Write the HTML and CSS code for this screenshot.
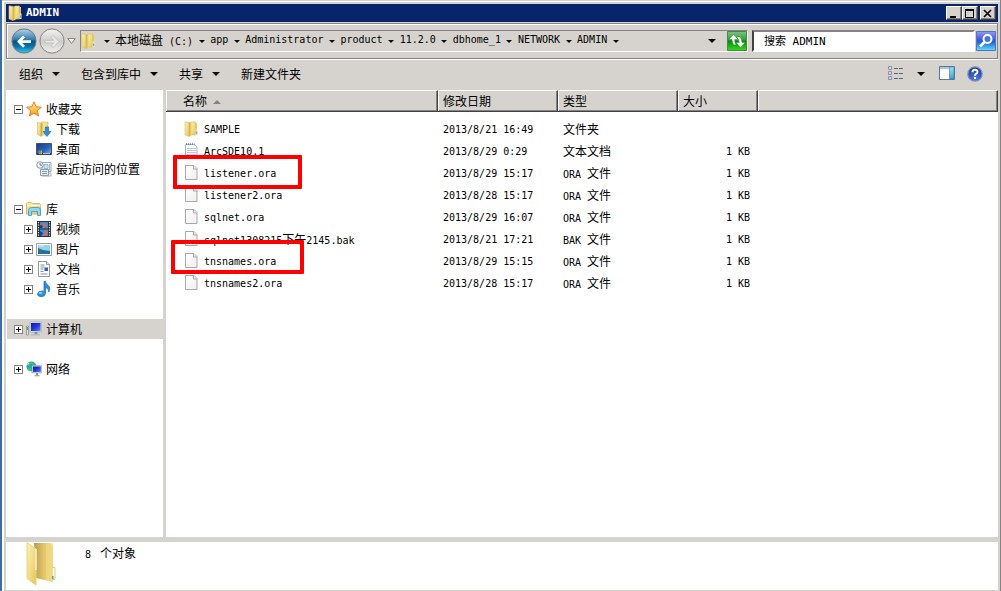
FILE: index.html
```html
<!DOCTYPE html>
<html lang="zh-CN">
<head>
<meta charset="utf-8">
<title>ADMIN</title>
<link rel="stylesheet" href="styles.css">
</head>
<body>
<svg class="sprite" aria-hidden="true">
  <defs>
    <linearGradient id="gold" x1="0" y1="0" x2="1" y2="1"><stop offset="0" stop-color="#fdf3b5"/><stop offset="1" stop-color="#e6c558"/></linearGradient>
    <linearGradient id="goldSide" x1="0" y1="0" x2="1" y2="0"><stop offset="0" stop-color="#b89c50"/><stop offset="0.5" stop-color="#e0c468"/><stop offset="1" stop-color="#f2dc85"/></linearGradient>
    <linearGradient id="screen" x1="0" y1="0" x2="1" y2="1"><stop offset="0" stop-color="#0a1a9c"/><stop offset="0.5" stop-color="#2238d8"/><stop offset="1" stop-color="#5f88f0"/></linearGradient>
    <linearGradient id="desk" x1="0" y1="0" x2="1" y2="1"><stop offset="0" stop-color="#123a86"/><stop offset="0.6" stop-color="#2c67ba"/><stop offset="1" stop-color="#8ab8e8"/></linearGradient>
    <linearGradient id="back" x1="0" y1="0" x2="0" y2="1"><stop offset="0" stop-color="#b5d4e6"/><stop offset="0.45" stop-color="#2c7bab"/><stop offset="0.5" stop-color="#07537f"/><stop offset="0.75" stop-color="#0877ad"/><stop offset="1" stop-color="#2fd2fb"/></linearGradient>
    <linearGradient id="fwd" x1="0" y1="0" x2="0" y2="1"><stop offset="0" stop-color="#f4f4f3"/><stop offset="0.5" stop-color="#cfcdca"/><stop offset="1" stop-color="#f0efed"/></linearGradient>
    <linearGradient id="green" x1="0" y1="0" x2="0" y2="1"><stop offset="0" stop-color="#7fc184"/><stop offset="0.45" stop-color="#2f9e35"/><stop offset="0.5" stop-color="#058a0b"/><stop offset="1" stop-color="#35dc1c"/></linearGradient>
    <linearGradient id="find" x1="0" y1="0" x2="0" y2="1"><stop offset="0" stop-color="#8f9cf3"/><stop offset="0.45" stop-color="#3d55dd"/><stop offset="0.55" stop-color="#1f62d8"/><stop offset="1" stop-color="#62e0fb"/></linearGradient>
    <linearGradient id="paper" x1="0" y1="0" x2="1" y2="1"><stop offset="0" stop-color="#fff"/><stop offset="1" stop-color="#f3ecef"/></linearGradient>
    <radialGradient id="help" cx="0.5" cy="0.8" r="0.8"><stop offset="0" stop-color="#4f7fe6"/><stop offset="1" stop-color="#17339b"/></radialGradient>
    <linearGradient id="star" x1="0" y1="0" x2="0" y2="1"><stop offset="0" stop-color="#fff08a"/><stop offset="1" stop-color="#f99b15"/></linearGradient>
    <linearGradient id="blueGlass" x1="0" y1="0" x2="0" y2="1"><stop offset="0" stop-color="#a7e0f5"/><stop offset="1" stop-color="#3d9fd0"/></linearGradient>
  </defs>
  <symbol id="i-folder" viewBox="0 0 16 16">
    <path d="M7 1h4.500v13H7z" fill="url(#gold)" stroke="#dcbb55" stroke-width=".6"/>
    <path d="M5 1.500 7.500 1v14L5 15.500z" fill="url(#goldSide)"/>
    <path d="M1 .8 5 1.500v14L1 14z" fill="url(#gold)" stroke="#dfc05c" stroke-width=".6"/>
    <path d="M11.500 2H13v12h-1.500z" fill="#e6c763"/>
    <path d="M11.500 8.500H13.500v5.500h-2z" fill="#f6e6a0"/><path d="M11.800 10.500h1.400v2.500h-1.400z" fill="#58b7e2"/>
  </symbol>
  <symbol id="i-bigfolder" viewBox="0 0 32 44">
    <path d="M8 1h16l3 3v36L10 36z" fill="url(#goldSide)"/>
    <path d="M20 2 27 1v39l-7-1.500z" fill="#efd880" opacity=".7"/>
    <path d="M1 .500 10 7v36L1 36.500z" fill="url(#gold)" stroke="#ecd280"/>
    <path d="M10 7v21" stroke="#fffbe0" stroke-width="1.200"/>
    <path d="M26 25.500h3v12h-3z" fill="#fffbe5" stroke="#e5cc78"/><path d="M26 34h1.600v3H26z" fill="#4b9be8"/>
  </symbol>
  <symbol id="i-star" viewBox="0 0 16 16">
    <path d="m8 .8 2.100 4.900 5.300.5-4 3.500 1.200 5.300L8 12.200 3.400 15l1.200-5.300-4-3.500 5.300-.5z" fill="url(#star)" stroke="#e2761b" stroke-width=".9"/>
  </symbol>
  <symbol id="i-download" viewBox="0 0 16 16">
    <path d="M1.500 1 5 2.500v13L1.500 13.500z" fill="url(#gold)" stroke="#d8b550" stroke-width=".6"/><path d="M5 1h7v13H5z" fill="url(#gold)" stroke="#d8b550" stroke-width=".6"/><path d="M5 2.500 7.500 1v13L5 15.500z" fill="url(#goldSide)"/>
    <path d="M9.500 6h3v4.500H15L11 15.500 7.200 10.500h2.300z" fill="#2e8ddf" stroke="#1266b0" stroke-width=".6"/>
  </symbol>
  <symbol id="i-desktop" viewBox="0 0 16 16">
    <path d="M.5 2.500h15v11H.5z" fill="url(#desk)" stroke="#40536e"/><path d="M1 12h14v1.500H1z" fill="#263a59"/><path d="M7 12h7v1H7z" fill="#aebfd3"/>
    <path d="M2.500 9.500h1.800v1.800H2.500z" fill="#f06a2c"/><path d="M4.500 9.500h1.500v1.800H4.500z" fill="#77d145"/><path d="M2.500 11.500h1.800V13H2.500z" fill="#49b5f2"/><path d="M4.500 11.500h1.500V13H4.500z" fill="#ffd43b"/>
  </symbol>
  <symbol id="i-recent" viewBox="0 0 16 16">
    <path d="M6 1.500h9v9H6z" fill="#f7fafc" stroke="#9daab3"/><path d="M8 3.500h4v4H8z" fill="#cce5f4" stroke="#6fa6c5" stroke-width=".7"/><path d="M13.500 3v6" stroke="#a8bac7"/>
    <path d="M4.500 8.500h8v6h-8z" fill="#e4edf1" stroke="#8c9ba5"/><path d="M6 10.500h5M6 12.500h5" stroke="#759fb5"/><path d="M13 12h2v3H6" fill="none" stroke="#a3adb4"/>
    <circle cx="4" cy="4" r="3.300" fill="#f5f6f7" stroke="#8e9aa5"/><path d="M4 2v2.200h2" fill="none" stroke="#53616e" stroke-width=".8"/>
  </symbol>
  <symbol id="i-library" viewBox="0 0 16 16">
    <path d="M.5 13V2.500l1-1h4l1 1h7l1 1V13z" fill="url(#gold)" stroke="#d3aa42" stroke-width=".8"/><path d="M1 4.500h13.500" stroke="#fff7c8"/>
    <path d="M2.500 14.500V9.500Q2.500 6.500 5.500 6.500h6.500q2.500 0 2.500 3v5h-3v-4h-6v4z" fill="#8fd6f3" stroke="#3a95c4" stroke-width=".8"/>
  </symbol>
  <symbol id="i-video" viewBox="0 0 16 16">
    <path d="M1 0h14v16H1z" fill="#27323c"/><path d="M4 1h8v6.500H4zM4 8.500h8V15H4z" fill="#3c8ed0"/>
    <path d="M7 1.500 11 4 8 7H6zM9 9l3 2-2 4H7z" fill="#d46e58"/><path d="m4 4 3 1-1 2H4zM4 10l3 2-2 3H4z" fill="#193f9e"/>
    <path d="M2.500 1v15M13.500 1v15" stroke="#dfe6eb" stroke-width="1.200" stroke-dasharray="1.200 1.300"/>
  </symbol>
  <symbol id="i-picture" viewBox="0 0 16 16">
    <path d="M.5 2.500h15v12H.5z" fill="#fff" stroke="#95a0a8"/><path d="M2 4h12v9H2z" fill="#8fd2f3"/><path d="m2 7 5 2 7 1V13H2z" fill="#2f7d55"/><path d="M2 11q6-2 12 0v2H2z" fill="#1c6eb5"/><path d="M3 5h5" stroke="#dff3fb"/>
  </symbol>
  <symbol id="i-document" viewBox="0 0 16 16">
    <path d="M2.500.5h8l3 3v12h-11z" fill="#fff" stroke="#929ba3"/><path d="M10.500.5v3h3" fill="#e3e8ec" stroke="#929ba3"/><path d="M4.500 4h4M4.500 6h4M4.500 8h3M4.500 10.500h3M4.500 13h7" stroke="#7b93ab"/><path d="M8.500 6.500H12V10H8.500z" fill="#2b5fc2"/>
  </symbol>
  <symbol id="i-music" viewBox="0 0 16 16">
    <path d="M8 .5h1.500q.3 2.500 2.800 4 2.500 2 .5 6.500.3-3.500-3.300-4.500v6q-.5 3-4 3.200-4 0-4-2.700.5-3 4.500-3 1.200 0 2 .5z" fill="#2c91de" stroke="#1769b5" stroke-width=".7"/><ellipse cx="4.500" cy="12" rx="1.800" ry="1" fill="#92d4fa"/>
  </symbol>
  <symbol id="i-computer" viewBox="0 0 16 16">
    <path d="M.5 5h2v9h-2z" fill="#dce1dc" stroke="#858b88" stroke-width=".7"/><path d="M1 6h1v3H1z" fill="#39b540"/>
    <path d="M4 1h11.500v10H4z" fill="#d9dde5" stroke="#a1a6b0" stroke-width=".6"/><path d="M5 2h9.500v8H5z" fill="url(#screen)"/><path d="M8.500 11h3v2h-3z" fill="#8b8e96"/><path d="M5 13h9v1.500H5z" fill="#b7bac0"/>
  </symbol>
  <symbol id="i-network" viewBox="0 0 16 16">
    <circle cx="5.500" cy="5.500" r="5" fill="#2796df"/><path d="M4 1q4-.5 5 2L7 5 6 3 3 5 1 4q1-2 3-3zM1 6l4 1v3H3Q1 8.500 1 6z" fill="#37c94c"/><path d="M3 2 1.500 4" stroke="#dff6ff"/>
    <path d="M6 4.500h9.700v7.500H6z" fill="#d4dae6" stroke="#959dac" stroke-width=".6"/><path d="M7 5.500h7.800v5.500H7z" fill="url(#screen)"/><path d="M10 12h2v2h-2zM8.500 14.200h5v1h-5z" fill="#858c97"/>
  </symbol>
  <symbol id="i-file" viewBox="0 0 16 16">
    <path d="M1.500.5h8.500l3 3v11H1.500z" fill="url(#paper)" stroke="#a9a7a9"/><path d="M9.500.5v3.500h3.500" fill="#eee" stroke="#a9a7a9"/>
  </symbol>
  <symbol id="i-text" viewBox="0 0 16 16">
    <path d="M1.500 1.500H10l3 2.500v10.500H1.500z" fill="#fdfdfe" stroke="#aeb1b6"/><path d="M2 1h8.500" stroke="#6f7780" stroke-width="1.500" stroke-dasharray="1 1"/><path d="M3 5.500h9M3 7.500h9M3 9.500h9M3 11.500h9" stroke="#a5bddb" stroke-width=".8"/>
  </symbol>
</svg>

<div class="window">
  <header class="titlebar">
    <svg class="icon" aria-hidden="true"><use href="#i-folder"/></svg>
    <h1 class="title">ADMIN</h1>
    <div class="caption">
      <button class="cap" aria-label="最小化"><svg viewBox="0 0 13 11"><path d="M3 8h6v2H3z"/></svg></button>
      <button class="cap" aria-label="最大化"><svg viewBox="0 0 13 11"><path d="M2 1h9v9H2zM3 3v6h7V3z" fill-rule="evenodd"/></svg></button>
      <button class="cap cap-close" aria-label="关闭"><svg viewBox="0 0 13 11"><path d="m3 2 7 7M10 2 3 9" stroke="#000" stroke-width="1.600"/></svg></button>
    </div>
  </header>

  <div class="addressbar">
    <div class="travel">
      <button class="plain round" aria-label="后退"><svg viewBox="0 0 26 26"><circle cx="13" cy="13" r="12" fill="url(#back)" stroke="#6c7c86"/><path d="M6 13.500 12 7.500l2 2-2.800 2.800H20v2.600h-8.800L14 17.700l-2 2z" fill="#fff"/></svg></button>
      <button class="plain round" aria-label="前进"><svg viewBox="0 0 26 26"><circle cx="13" cy="13" r="12" fill="url(#fwd)" stroke="#8f8e8d"/><path d="M20 13.500 14 7.500l-2 2 2.800 2.800H6v2.600h8.800L12 17.700l2 2z" fill="#e9e8e6" stroke="#b8b6b3" stroke-width=".7"/></svg></button>
      <button class="plain history" aria-label="最近的页面"><svg viewBox="0 0 9 7"><path d="M.7.500h7.600L4.500 5.500z" fill="#f4f4f4" stroke="#858585"/></svg></button>
    </div>
    <nav class="path" aria-label="地址">
      <svg class="icon" aria-hidden="true"><use href="#i-folder"/></svg>
      <button class="plain arrow first" aria-label="展开"><i class="tri"></i></button>
      <a href="#c">本地磁盘<span class="en"> (C:)</span></a><button class="plain arrow" aria-label="展开"><i class="tri"></i></button>
      <a href="#app" class="en">app</a><button class="plain arrow" aria-label="展开"><i class="tri"></i></button>
      <a href="#administrator" class="en">Administrator</a><button class="plain arrow" aria-label="展开"><i class="tri"></i></button>
      <a href="#product" class="en">product</a><button class="plain arrow" aria-label="展开"><i class="tri"></i></button>
      <a href="#version" class="en">11.2.0</a><button class="plain arrow" aria-label="展开"><i class="tri"></i></button>
      <a href="#dbhome" class="en">dbhome_1</a><button class="plain arrow" aria-label="展开"><i class="tri"></i></button>
      <a href="#network" class="en">NETWORK</a><button class="plain arrow" aria-label="展开"><i class="tri"></i></button>
      <a href="#admin" class="en">ADMIN</a><button class="plain arrow" aria-label="展开"><i class="tri"></i></button>
      <span class="spacer"></span>
      <button class="plain drop" aria-label="以前的位置"><i class="tri tri-big"></i></button>
      <button class="plain square" aria-label="刷新"><svg viewBox="0 0 20 20"><path d="M.5.500h19v19H.5z" fill="url(#green)" stroke="#418b45"/><path d="M6.500 3.500 2 8.500h3q.2 4 2 5.500h2q-1.500-2.500-1.300-5.500H11zM13.500 16.500l4.500-5h-3q-.2-4-2-5.500H9.500q2.800 2 2.800 5.500H9z" fill="#fff" stroke="#1c7a22" stroke-width=".4"/></svg></button>
    </nav>
    <form class="search">
      <input class="search-box" type="text" aria-label="搜索" value="搜索 ADMIN">
      <button class="plain square" type="button" aria-label="开始搜索"><svg viewBox="0 0 20 20"><path d="M.5.500h19v19H.5z" fill="url(#find)" stroke="#5a72b8"/><circle cx="11.500" cy="8" r="4" fill="#4b70dd" stroke="#fff" stroke-width="2"/><path d="m8.500 11-4.500 4.500" stroke="#fff" stroke-width="2.600"/></svg></button>
    </form>
  </div>

  <div class="toolbar">
    <button class="plain tool">组织<i class="tri tri-big"></i></button>
    <button class="plain tool">包含到库中<i class="tri tri-big"></i></button>
    <button class="plain tool">共享<i class="tri tri-big"></i></button>
    <button class="plain tool">新建文件夹</button>
    <span class="spacer"></span>
    <button class="plain view" aria-label="更改视图"><svg class="icon" viewBox="0 0 16 16"><path d="M.5.500h3v3h-3zM.5 5.500h3v3h-3zM.5 10.500h3v3h-3z" fill="#fff" stroke="#8794a8"/><path d="M1.500 1.500h1v1h-1z" fill="#24a148"/><path d="M1.500 6.500h1v1h-1z" fill="#d22"/><path d="M1.500 11.500h1v1h-1z" fill="#2563c9"/><path d="M6 2.500h10M6 7.500h10M6 12.500h10" stroke="#56657c" stroke-dasharray="4 1"/></svg></button>
    <button class="plain viewmenu" aria-label="更多选项"><i class="tri tri-big"></i></button>
    <button class="plain pane" aria-label="预览窗格"><svg class="icon" viewBox="0 0 16 16"><path d="M.5.500h15v13H.5z" fill="#fff" stroke="#5b7898"/><path d="M1 1h9v2H1z" fill="#a8c8e0"/><path d="M10.500 1H15v12h-4.500z" fill="url(#blueGlass)" stroke="#317ca8" stroke-width=".6"/></svg></button>
    <button class="plain" aria-label="帮助"><svg class="icon" viewBox="0 0 16 16"><circle cx="8" cy="8" r="7.200" fill="url(#help)" stroke="#8092b8" stroke-width="1.300"/><path d="M5.500 6.200Q5.500 3.800 8 3.800t2.500 2.100Q10.500 7 9 7.800 8 8.400 8 9.700" fill="none" stroke="#fff" stroke-width="1.900"/><path d="M7 11h2v2H7z" fill="#fff"/></svg></button>
  </div>

  <main class="content">
    <nav class="tree" aria-label="导航窗格">
      <div class="node"><button class="plain box open" aria-label="折叠"></button><a href="#fav"><svg class="icon"><use href="#i-star"/></svg>收藏夹</a></div>
      <div class="node leaf"><a href="#downloads"><svg class="icon"><use href="#i-download"/></svg>下载</a></div>
      <div class="node leaf"><a href="#desktop"><svg class="icon"><use href="#i-desktop"/></svg>桌面</a></div>
      <div class="node leaf last"><a href="#recent"><svg class="icon"><use href="#i-recent"/></svg>最近访问的位置</a></div>
      <div class="node"><button class="plain box open" aria-label="折叠"></button><a href="#lib"><svg class="icon"><use href="#i-library"/></svg>库</a></div>
      <div class="node child"><button class="plain box" aria-label="展开"></button><a href="#video"><svg class="icon"><use href="#i-video"/></svg>视频</a></div>
      <div class="node child"><button class="plain box" aria-label="展开"></button><a href="#pictures"><svg class="icon"><use href="#i-picture"/></svg>图片</a></div>
      <div class="node child"><button class="plain box" aria-label="展开"></button><a href="#documents"><svg class="icon"><use href="#i-document"/></svg>文档</a></div>
      <div class="node child last"><button class="plain box" aria-label="展开"></button><a href="#music"><svg class="icon"><use href="#i-music"/></svg>音乐</a></div>
      <div class="node selected last"><button class="plain box" aria-label="展开"></button><a href="#computer"><svg class="icon"><use href="#i-computer"/></svg>计算机</a></div>
      <div class="node"><button class="plain box" aria-label="展开"></button><a href="#net"><svg class="icon"><use href="#i-network"/></svg>网络</a></div>
    </nav>

    <section class="list">
      <table class="files">
        <colgroup><col class="c-name"><col class="c-date"><col class="c-type"><col class="c-size"><col></colgroup>
        <thead>
          <tr><th class="name">名称<i class="sort"></i></th><th>修改日期</th><th>类型</th><th>大小</th><th aria-label="空白"></th></tr>
        </thead>
        <tbody>
          <tr><td class="name"><div class="file"><svg class="icon"><use href="#i-folder"/></svg><span class="en">SAMPLE</span></div></td><td class="en">2013/8/21 16:49</td><td>文件夹</td><td></td><td></td></tr>
          <tr><td class="name"><div class="file"><svg class="icon"><use href="#i-text"/></svg><span class="en">ArcSDE10.1</span></div></td><td class="en">2013/8/29 0:29</td><td>文本文档</td><td class="size en">1 KB</td><td></td></tr>
          <tr><td class="name"><div class="file"><svg class="icon"><use href="#i-file"/></svg><span class="en">listener.ora</span></div></td><td class="en">2013/8/29 15:17</td><td><span class="en">ORA </span>文件</td><td class="size en">1 KB</td><td></td></tr>
          <tr><td class="name"><div class="file"><svg class="icon"><use href="#i-file"/></svg><span class="en">listener2.ora</span></div></td><td class="en">2013/8/28 15:17</td><td><span class="en">ORA </span>文件</td><td class="size en">1 KB</td><td></td></tr>
          <tr><td class="name"><div class="file"><svg class="icon"><use href="#i-file"/></svg><span class="en">sqlnet.ora</span></div></td><td class="en">2013/8/29 16:07</td><td><span class="en">ORA </span>文件</td><td class="size en">1 KB</td><td></td></tr>
          <tr><td class="name"><div class="file"><svg class="icon"><use href="#i-file"/></svg><span><span class="en">sqlnet1308215</span>下午<span class="en">2145.bak</span></span></div></td><td class="en">2013/8/21 17:21</td><td><span class="en">BAK </span>文件</td><td class="size en">1 KB</td><td></td></tr>
          <tr><td class="name"><div class="file"><svg class="icon"><use href="#i-file"/></svg><span class="en">tnsnames.ora</span></div></td><td class="en">2013/8/29 15:15</td><td><span class="en">ORA </span>文件</td><td class="size en">1 KB</td><td></td></tr>
          <tr><td class="name"><div class="file"><svg class="icon"><use href="#i-file"/></svg><span class="en">tnsnames2.ora</span></div></td><td class="en">2013/8/28 15:17</td><td><span class="en">ORA </span>文件</td><td class="size en">1 KB</td><td></td></tr>
        </tbody>
      </table>
      <div class="mark mark-listener"></div>
      <div class="mark mark-tnsnames"></div>
    </section>
  </main>

  <footer class="details">
    <svg class="bigicon" aria-hidden="true"><use href="#i-bigfolder"/></svg>
    <p class="count"><span class="en number">8 </span>个对象</p>
  </footer>
</div>
</body>
</html>
```

FILE: styles.css
```css
* { box-sizing: border-box; }

body {
  margin: 0;
  height: 100vh;
  overflow: hidden;
  background: #d6d3ce;
  color: #000;
  font: 12px/20px "Noto Sans CJK SC", sans-serif;
}

.sprite { position: absolute; width: 0; height: 0; }
.icon { width: 16px; height: 16px; flex: none; display: block; }
.en { font: 10px/10px "DejaVu Sans Mono", monospace; white-space: pre; }
.spacer { flex: 1; }
a { color: inherit; text-decoration: none; }

.plain {
  padding: 0;
  border: 0;
  background: none;
  color: inherit;
  font: inherit;
  flex: none;
}
.plain svg { display: block; }

.tri {
  display: block;
  border: 3px solid transparent;
  border-top-color: #000;
  border-bottom: 0;
}
.tri-big { border-width: 4px; border-bottom: 0; }

.window {
  display: flex;
  flex-direction: column;
  height: 100%;
  padding: 4px 2px 1px 4px;
  border-left: 2px solid #3a6ea5;
  border-right: 1px solid #848284;
  box-shadow: inset 0 1px #d6d3ce, inset 2px 2px #fff;
}

/* Title bar */
.titlebar {
  display: flex;
  align-items: center;
  flex: none;
  height: 18px;
  padding: 0 2px;
  background: #08246b;
  color: #fff;
}
.title {
  flex: 1;
  margin: 0 0 0 2px;
  font: bold 11px/18px "DejaVu Sans Mono", monospace;
}
.caption { display: flex; }
.cap {
  width: 16px;
  height: 14px;
  padding: 0;
  border: 1px solid;
  border-color: #fff #424142 #424142 #fff;
  background: #d6d3ce;
  box-shadow: inset -1px -1px #848284;
}
.cap svg { display: block; width: 13px; height: 11px; }
.cap-close { margin-left: 2px; }

/* Address bar */
.addressbar {
  display: flex;
  align-items: center;
  flex: none;
  height: 36px;
  margin-top: 1px;
  padding: 0 1px 0 4px;
  border: 1px solid #848284;
  box-shadow: inset 1px 1px #fff, 0 1px #fff;
}
.travel { display: flex; align-items: center; width: 69px; }
.round { width: 26px; height: 26px; margin-right: 2px; border-radius: 13px; background: #c5c3c0; }
.history { width: 9px; height: 7px; }
.path {
  display: flex;
  align-items: center;
  flex: 1;
  height: 22px;
  min-width: 0;
  border: 1px solid;
  border-color: #848284 #fff #fff #848284;
  white-space: nowrap;
}
.path a { padding-bottom: 2px; }
.arrow { width: 17px; display: flex; justify-content: center; }
.arrow.first { margin-left: 1px; }
.drop { width: 8px; margin-right: 11px; }
.square { width: 20px; height: 20px; }
.search { display: flex; align-items: center; gap: 1px; margin-left: 4px; }
.search-box {
  width: 223px;
  height: 22px;
  padding: 0 10px 2px;
  border: 2px solid;
  border-color: #848284 #fff #fff #424142;
  background: #fff;
  color: #000;
  font: 11px/16px "DejaVu Sans Mono", "Noto Sans CJK SC", monospace;
}

/* Command bar */
.toolbar {
  display: flex;
  align-items: center;
  flex: none;
  height: 31px;
  padding: 0 15px 2px 13px;
}
.tool { display: flex; align-items: center; gap: 9px; margin-right: 21px; }
.view { margin-right: 13px; }
.viewmenu { margin-right: 14px; }
.pane { margin-right: 12px; }

/* Panes */
.content {
  display: grid;
  grid-template-columns: 157px 1fr;
  gap: 3px;
  flex: 1;
  min-height: 0;
}
.tree { padding: 9px 0 0 1px; background: #fff; }
.node { display: flex; align-items: center; gap: 3px; height: 20px; padding-left: 7px; }
.node a { display: flex; align-items: center; gap: 4px; }
.child { padding-left: 17px; }
.leaf { padding-left: 29px; }
.last { margin-bottom: 20px; }
.selected { background: #d6d3ce; }
.box {
  width: 9px;
  height: 9px;
  border: 1px solid #848284;
  background:
    linear-gradient(#000, #000) center / 5px 1px no-repeat,
    linear-gradient(#000, #000) center / 1px 5px no-repeat,
    #fff;
}
.box.open { background: linear-gradient(#000, #000) center / 5px 1px no-repeat, #fff; }

.list { position: relative; background: #fff; }
.files { width: 100%; table-layout: fixed; border-collapse: separate; border-spacing: 0; }
.c-name { width: 272px; }
.c-date, .c-type { width: 120px; }
.c-size { width: 80px; }
.files th {
  height: 22px;
  padding: 0 5px;
  border-top: 1px solid #fff;
  border-right: 1px solid #424142;
  border-bottom: 1px solid #424142;
  background: #d6d3ce;
  box-shadow: inset 1px 0 #fff, inset -1px -1px #848284;
  font-weight: normal;
  text-align: left;
}
.files th.name { padding-left: 17px; }
.sort {
  display: inline-block;
  margin: 0 0 2px 6px;
  border: 4px solid transparent;
  border-top: 0;
  border-bottom-color: #848284;
}
.files tbody::before { content: ""; display: table-row; height: 6px; }
.files td { height: 22px; padding: 0 5px; }
.files td.en { padding-top: 2px; }
.files td.name { padding-left: 18px; }
.files td.size { padding-right: 8px; text-align: right; }
.file { display: flex; align-items: center; gap: 4px; height: 20px; }
.file > .en { padding-top: 2px; }

.mark { position: absolute; height: 34px; border: 4px solid #fe0000; border-radius: 1px; }
.mark-listener { left: 7px; top: 65px; width: 129px; }
.mark-tnsnames { left: 5px; top: 150px; width: 133px; }

/* Details pane */
.details {
  display: flex;
  flex: none;
  height: 48px;
  margin-top: 5px;
  padding-left: 20px;
  background: #fff;
}
.bigicon { width: 32px; height: 44px; }
.count { margin: 1px 0 0 27px; }
.number { margin-right: 3px; }
```
